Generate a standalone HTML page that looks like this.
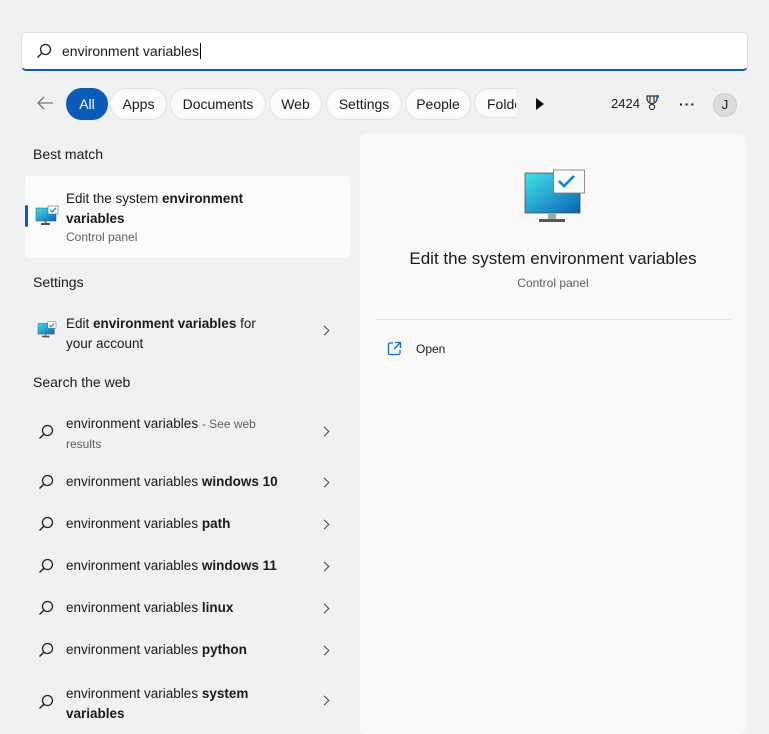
<!DOCTYPE html>
<html><head><style>
body{margin:0;width:769px;height:722px;overflow:hidden;background:#eff1f2;font-family:"Liberation Sans",sans-serif;color:#1a1a1a;position:relative}
.a{position:absolute}
.chip{position:absolute;top:88px;height:30px;border:1px solid #e3e3e3;background:#fbfbfb;border-radius:16px;font-size:14px;line-height:30px;text-align:center;color:#1a1a1a}
.h{position:absolute;left:33px;font-size:14px;color:#1a1a1a}
.t{position:absolute;left:66px;font-size:13.5px;color:#1a1a1a}
.s{color:#5f5f5f;font-size:12px}
.chev{position:absolute;left:321px;width:6px;height:6px;border-right:1.5px solid #444;border-top:1.5px solid #444;transform:rotate(45deg)}
.mag{position:absolute;left:38px}
</style></head><body>
<div class="a" style="left:21px;top:32px;width:725px;height:36px;background:#fff;border:1px solid #e0e0e0;border-bottom:2px solid #0b5cb8;border-radius:5px"></div>
<svg class="a" style="left:36px;top:43px" width="16" height="16" viewBox="0 0 16 16"><circle cx="9.5" cy="6.5" r="5" fill="none" stroke="#222" stroke-width="1.3"/><path d="M6 10L1.5 14.5" stroke="#222" stroke-width="1.4"/></svg>
<div class="a" style="left:62px;top:43px;font-size:14px">environment variables<span style="border-left:1px solid #000;margin-left:1px"></span></div>
<svg class="a" style="left:36px;top:95px" width="18" height="16" viewBox="0 0 18 16"><path d="M17 8H2M8 2L2 8l6 6" fill="none" stroke="#777" stroke-width="1.3"/></svg>
<div class="chip" style="left:66px;width:40px;background:#0b5cb8;border-color:#0b5cb8;color:#fff">All</div>
<div class="chip" style="left:110px;width:55px">Apps</div>
<div class="chip" style="left:170px;width:94px">Documents</div>
<div class="chip" style="left:269px;width:51px">Web</div>
<div class="chip" style="left:326px;width:74px">Settings</div>
<div class="chip" style="left:405px;width:64px">People</div>
<div class="a" style="left:474px;top:88px;width:42px;height:32px;overflow:hidden"><div class="chip" style="left:0;top:0;width:60px;text-align:left;padding-left:12px;box-sizing:border-box">Folders</div></div>
<div class="a" style="left:536px;top:98px;width:0;height:0;border-left:8px solid #111;border-top:6px solid transparent;border-bottom:6px solid transparent"></div>
<div class="a" style="left:611px;top:96px;font-size:13px">2424</div>
<svg class="a" style="left:644px;top:95px" width="16" height="16" viewBox="0 0 16 16"><path d="M3 1h10v2.5a5 5 0 0 1-10 0z M6 1v6M10 1v6" fill="none" stroke="#333" stroke-width="1.2"/><circle cx="8" cy="12" r="2.6" fill="none" stroke="#333" stroke-width="1.2"/><circle cx="13.5" cy="1.5" r="1.6" fill="#0b6cd0"/></svg>
<div class="a" style="left:679px;top:96px;font-size:14px;letter-spacing:1px;font-weight:bold">···</div>
<div class="a" style="left:713px;top:93px;width:22px;height:22px;border-radius:50%;background:#dcdcdc;border:1px solid #ccc;font-size:13px;text-align:center;line-height:22px">J</div>

<div class="h" style="top:146px">Best match</div>
<div class="a" style="left:25px;top:176px;width:325px;height:82px;background:#fafbfb;border-radius:4px"></div>
<div class="a" style="left:25px;top:205px;width:3px;height:22px;background:#0b5cb8;border-radius:2px"></div>
<svg class="a" style="left:35px;top:205px" width="24" height="22" viewBox="0 0 24 22"><defs><linearGradient id="g" x1="0" y1="0" x2="1" y2="1"><stop offset="0" stop-color="#3fe0e6"/><stop offset="1" stop-color="#0a67b8"/></linearGradient></defs><rect x="1" y="3" width="20" height="13" fill="url(#g)" stroke="#444" stroke-width=".5"/><rect x="9" y="16" width="3" height="2" fill="#999"/><rect x="6" y="18" width="9" height="2" fill="#555"/><rect x="13" y="1" width="10" height="8" fill="#fff" stroke="#666" stroke-width=".6"/><path d="M15 5l2 2 4-4" stroke="#1580e0" stroke-width="1.3" fill="none"/></svg>
<div class="t" style="top:189px;line-height:20px">Edit the system <b>environment<br>variables</b></div>
<div class="t s" style="top:230px">Control panel</div>

<div class="h" style="top:274px">Settings</div>
<svg class="a" style="left:37px;top:321px" width="20" height="18" viewBox="0 0 24 22"><rect x="1" y="3" width="20" height="13" fill="url(#g)" stroke="#444" stroke-width=".5"/><rect x="9" y="16" width="3" height="2" fill="#999"/><rect x="6" y="18" width="9" height="2" fill="#555"/><rect x="13" y="1" width="10" height="8" fill="#fff" stroke="#666" stroke-width=".6"/><path d="M15 5l2 2 4-4" stroke="#1580e0" stroke-width="1.3" fill="none"/></svg>
<div class="t" style="top:314px;line-height:20px">Edit <b>environment variables</b> for<br>your account</div>
<div class="chev" style="top:327px"></div>

<div class="h" style="top:374px">Search the web</div>

<svg width="0" height="0" style="position:absolute"><defs><g id="m"><circle cx="9.5" cy="6.5" r="5" fill="none" stroke="#222" stroke-width="1.3"/><path d="M6 10L1.5 14.5" stroke="#222" stroke-width="1.4"/></g></defs></svg>
<svg class="mag" style="top:424px" width="16" height="16"><use href="#m"/></svg>
<div class="t" style="top:414px;line-height:20px">environment variables <span class="s">- See web<br>results</span></div>
<div class="chev" style="top:428px"></div>

<svg class="mag" style="top:474px" width="16" height="16"><use href="#m"/></svg>
<div class="t" style="top:474px">environment variables <b>windows 10</b></div><div class="chev" style="top:479px"></div>
<svg class="mag" style="top:516px" width="16" height="16"><use href="#m"/></svg>
<div class="t" style="top:516px">environment variables <b>path</b></div><div class="chev" style="top:521px"></div>
<svg class="mag" style="top:558px" width="16" height="16"><use href="#m"/></svg>
<div class="t" style="top:558px">environment variables <b>windows 11</b></div><div class="chev" style="top:563px"></div>
<svg class="mag" style="top:600px" width="16" height="16"><use href="#m"/></svg>
<div class="t" style="top:600px">environment variables <b>linux</b></div><div class="chev" style="top:605px"></div>
<svg class="mag" style="top:642px" width="16" height="16"><use href="#m"/></svg>
<div class="t" style="top:642px">environment variables <b>python</b></div><div class="chev" style="top:647px"></div>
<svg class="mag" style="top:694px" width="16" height="16"><use href="#m"/></svg>
<div class="t" style="top:684px;line-height:20px">environment variables <b>system<br>variables</b></div><div class="chev" style="top:697px"></div>

<div class="a" style="left:360px;top:134px;width:386px;height:600px;background:#f9f9f9;border-radius:7px"></div>
<svg class="a" style="left:524px;top:169px" width="62" height="54" viewBox="0 0 62 54"><defs><linearGradient id="g2" x1="0" y1="0" x2="1" y2="1"><stop offset="0" stop-color="#43e3e8"/><stop offset="1" stop-color="#0a62b5"/></linearGradient></defs><rect x="1" y="4" width="55" height="40" fill="url(#g2)" stroke="#444" stroke-width=".7"/><rect x="24" y="44" width="8" height="6" fill="#9aa"/><rect x="15" y="50" width="26" height="3" fill="#555"/><rect x="29.5" y="1" width="31" height="23" fill="#fafafa" stroke="#777" stroke-width=".8"/><path d="M35 12l5 5 10-10" stroke="#1580e0" stroke-width="2.6" fill="none"/></svg>
<div class="a" style="left:360px;top:249px;width:386px;text-align:center;font-size:17px;color:#1a1a1a">Edit the system environment variables</div>
<div class="a" style="left:360px;top:276px;width:386px;text-align:center;font-size:12px;color:#5f5f5f">Control panel</div>
<div class="a" style="left:376px;top:319px;width:355px;height:1px;background:#e2e2e2"></div>
<svg class="a" style="left:387px;top:341px" width="15" height="15" viewBox="0 0 15 15"><path d="M6 2H3a1.5 1.5 0 0 0-1.5 1.5v8.5A1.5 1.5 0 0 0 3 13.5h8.5A1.5 1.5 0 0 0 13 12V9M8 1.5h5.5V7M13.5 1.5L7 8" fill="none" stroke="#0b6cd0" stroke-width="1.3"/></svg>
<div class="a" style="left:416px;top:342px;font-size:12px">Open</div>
</body></html>
